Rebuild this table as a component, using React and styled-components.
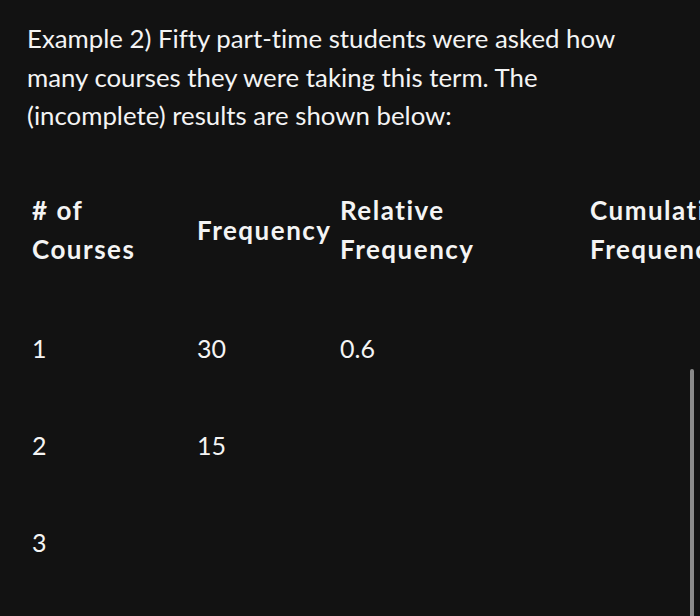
import React from 'react'
import styled, { createGlobalStyle } from 'styled-components'

const GlobalStyle = createGlobalStyle`
    html, body{
        margin:0;
        padding:0;
        background:#121212;
        overflow:hidden;
    }
    body{
        font-family:Lato, "Open Sans", sans-serif;
        color:#f4f4f4;
    }
`

const rows = [
    { courses: '1', freq: '30', rel: '0.6', cum: '' },
    { courses: '2', freq: '15', rel: '', cum: '' },
    { courses: '3', freq: '', rel: '', cum: '' },
]

function App() {
    return (
        <Page>
            <GlobalStyle />
            <Question>
                Example 2) Fifty part-time students were asked how many courses they were taking this term. The (incomplete) results are shown below:
            </Question>
            <TableWrap>
                <Table>
                    <HeadCell>
                        # of<br />Courses
                    </HeadCell>
                    <HeadCell>Frequency</HeadCell>
                    <HeadCell>
                        Relative<br />Frequency
                    </HeadCell>
                    <HeadCell>
                        Cumulative<br />Frequency
                    </HeadCell>
                    {rows.map((r) => (
                        <React.Fragment key={r.courses}>
                            <Cell>{r.courses}</Cell>
                            <Cell>{r.freq}</Cell>
                            <Cell>{r.rel}</Cell>
                            <Cell>{r.cum}</Cell>
                        </React.Fragment>
                    ))}
                </Table>
            </TableWrap>
            <ScrollThumb />
        </Page>
    )
}

const Page = styled.div`
    position:relative;
    width:700px;
    height:616px;
    overflow:hidden;
    padding:19px 0 0 27px;
    box-sizing:border-box;
`

const Question = styled.p`
    margin:0;
    width:620px;
    font-size:25.8px;
    line-height:38.5px;
    font-variant-ligatures:none;
`

const TableWrap = styled.div`
    margin-top:46.5px;
    margin-left:5px;
    width:900px;
`

const Table = styled.div`
    display:grid;
    grid-template-columns:165px 143px 250px 250px;
    grid-template-rows:98px repeat(3, 97px);
    align-items:center;
`

const HeadCell = styled.div`
    font-weight:700;
    font-size:26px;
    line-height:39px;
    letter-spacing:1.5px;
    white-space:nowrap;
`

const Cell = styled.div`
    font-size:25px;
    line-height:30px;
    padding-top:40px;
`

const ScrollThumb = styled.div`
    position:absolute;
    right:6px;
    top:369px;
    bottom:-4px;
    width:4px;
    border-radius:3px;
    background:#8a8a8a;
`

export default App
